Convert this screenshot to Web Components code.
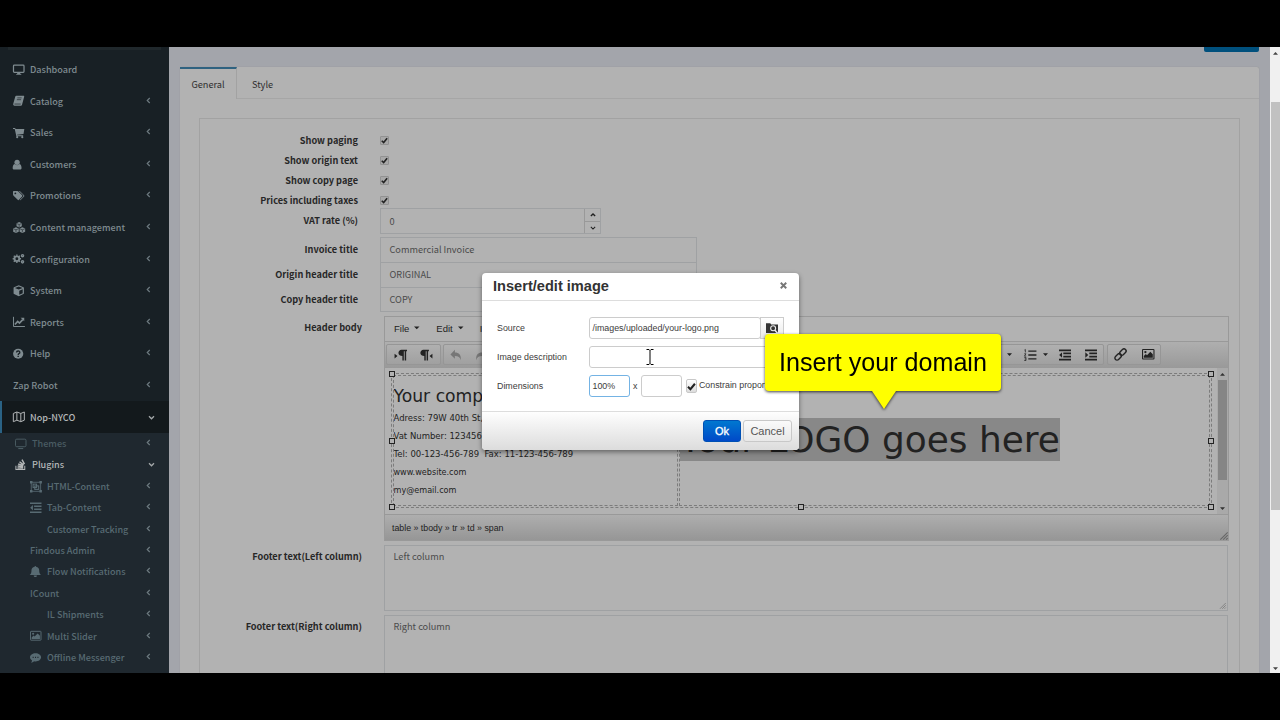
<!DOCTYPE html>
<html lang="en">
<head>
<meta charset="utf-8">
<title>Invoice settings</title>
<style>
	body {
		margin: 0;
		width: 1280px;
		height: 720px;
		overflow: hidden;
		background: #000;
		font-family: "Noto Sans CJK SC", "Open Sans", sans-serif;
	}
</style>
</head>
<body>
<admin-page></admin-page>

<script>
// 14x14 glyphs, drawn with currentColor
const F = 'fill="currentColor" stroke="none"';
const ICONS = {
	desktop: `<rect x=".6" y="1.4" width="12.8" height="8.8" rx="1" stroke-width="1.5"/><path ${F} d="M5.5 10h3l.6 2.2h1v1H3.9v-1h1z"/>`,
	book: `<path ${F} d="M4 .8h8.6c.9 0 1.200.6 1 1.400L11 12c-.2.800-.7 1.200-1.400 1.200H1.800C.6 13.200-.1 12 .3 10.800L2.700 2C2.900 1.200 3.300.8 4 .8z"/><path stroke="#182025" stroke-width=".8" d="M5.300 3.500h5.200M4.700 5.700h5.200M1.800 11h7.600"/>`,
	cart: `<path ${F} d="M0 1.200h2.600l.5 1.300h10.700l-1 6-7.900.8.2.8h7.300v1.200H4.100L2.100 2.500H0z"/><circle ${F} cx="5.100" cy="12.400" r="1.300"/><circle ${F} cx="11.300" cy="12.400" r="1.300"/>`,
	user: `<circle ${F} cx="5" cy="4" r="3.200"/><path ${F} d="M2 6.200c1.800 1.700 4.200 1.700 6 0 1.700.6 2.400 2.700 2.400 4.700 0 1.200-.8 2-2 2H1.600c-1.200 0-2-.8-2-2 0-2 .7-4.100 2.400-4.700z"/>`,
	tags: `<path ${F} fill-rule="evenodd" d="M0 2.500C0 1.800.5 1.300 1.200 1.300h4c.6 0 1.200.3 1.600.7l4.300 4.400c.5.5.5 1.100 0 1.600L7.300 12c-.5.5-1.100.5-1.600 0L1 7.300C.4 6.900 0 6.200 0 5.600zM2.800 3a1.100 1.100 0 1 0 .1 2.200A1.100 1.100 0 0 0 2.800 3z"/><path ${F} d="M7 1.300h.6c.6 0 1.200.3 1.600.7l4.300 4.400c.5.5.5 1.100 0 1.600l-3.900 4c-.5.5-.9.5-1.400.2l4-4c.6-.6.6-1.400 0-2z"/>`,
	cubes: `<path ${F} d="M7.500 0l3.200 1.400v3.800l-3.200 1.500-3.200-1.500V1.400zM3.600 6.300L7 7.800v4l-3.400 1.600L.2 11.800v-4zM11.400 6.300l3.400 1.500v4l-3.400 1.600L8 11.800v-4z"/><path stroke="#182025" stroke-width=".7" d="M4.500 1.900l3 1.200 3-1.200M.6 8.300l3 1.200 3-1.200M8.400 8.300l3 1.200 3-1.200M7.500 3.200v3M3.600 9.500v3M11.400 9.500v3"/>`,
	cogs: `<circle cx="4.700" cy="7" r="2.900" stroke-width="2.300"/><path stroke-width="1.700" d="M4.700 1.800v1.600M4.700 10.600v1.600M-.4 7h1.500M8.300 7h1.500M1 3.300l1.200 1.200M8.400 3.300L7.200 4.500M1 10.700l1.200-1.200M8.400 10.700L7.200 9.500"/><circle cx="11.600" cy="3.300" r="1.300" stroke-width="1.700"/><circle cx="11.600" cy="10.800" r="1.300" stroke-width="1.700"/>`,
	cube: `<path ${F} fill-rule="evenodd" d="M7 .3l5.700 2.500c.4.200.6.400.6.900v6.400c0 .4-.2.700-.6.900L7 13.700 1.300 11c-.4-.2-.6-.5-.6-.9V3.700c0-.5.2-.7.600-.9zM7 1.800L2.300 3.700 7 5.600l4.700-1.900zM7.600 7v5l4.200-2V5.300z"/>`,
	chart: `<path d="M.6 1v11.800H14.500" stroke-width="1.200"/><path d="M2.300 10.300l3.400-3.700 2.200 2 4-4.200" stroke-width="2"/><path ${F} d="M9.300 2h4.400v4.400z"/>`,
	help: `<circle ${F} cx="6.300" cy="7" r="6.200"/><path stroke="#182025" stroke-width="1.600" d="M4.300 5.600C4.300 3 8.300 3 8.300 5.400 8.300 6.900 6.300 6.700 6.300 8.400"/><path stroke="#182025" stroke-width="1.700" d="M6.300 9.500v1.600"/>`,
	map: `<path d="M.4 3l4.300-1.800v10L.4 13zM4.700 1.200L9.500 3v10l-4.800-1.800M9.500 3l4.300-1.800v10L9.500 13" stroke-width="1.200"/>`,
	themes: `<rect x=".6" y="1.400" width="12.800" height="9.200" rx="1.500" stroke-width="1.200"/><path d="M4 12.800h6" stroke-width="1.400"/>`,
	plugin: `<path ${F} d="M.5 8.200h1.200v4h9.600v-4h1.200v5.300H.5z"/><path stroke-width="1.800" d="M3 10.900h7M3.200 8.600l6.800.9M3.900 6l6.300 2.100M5.500 3.300l5 3.900M8.500.8l3 5.400"/>`,
	group: `<rect x="1.500" y="1.500" width="11.500" height="11" stroke-width="1"/><path ${F} d="M0 0h3v3H0zM11.500 0h3v3h-3zM0 11h3v3H0zM11.500 11h3v3h-3z"/><rect x="3.800" y="3.800" width="4.200" height="4.200"/><rect x="5.800" y="6" width="4.800" height="4.200"/>`,
	dedent: `<path stroke-width="2" d="M0 1.500h14M5 5.200h9M5 8.800h9M0 12.500h14"/><path ${F} d="M3.600 3.700v6.600L.2 7z"/>`,
	indent: `<path stroke-width="2" d="M0 1.500h14M5 5.200h9M5 8.800h9M0 12.500h14"/><path ${F} d="M.4 3.700v6.600L3.800 7z"/>`,
	bell: `<path ${F} d="M6.500 0c.6 0 .9.400.9.900 2.400.4 3.800 2 3.800 4.200 0 3 .7 4.600 2.200 6H-.4c1.500-1.400 2.200-3 2.200-6 0-2.200 1.400-3.800 3.800-4.200 0-.5.3-.9.900-.9zM4.500 11.500h4c0 2.700-4 2.700-4 0z"/>`,
	image: `<rect x=".6" y="1.600" width="12.800" height="10.800" rx=".6" stroke-width="1.200"/><circle ${F} cx="3.800" cy="4.600" r="1.300"/><path ${F} d="M2 11V9l2.300-2.300L5.600 8l3.700-3.800L12.100 7v4z"/>`,
	chat: `<path ${F} fill-rule="evenodd" d="M6.800 1.500c3.700 0 6.700 2.200 6.700 5s-3 5-6.700 5c-.6 0-1.200 0-1.700-.2-1.200 1.100-2.500 1.600-3.900 1.700.7-.8 1.200-1.700 1.300-2.700C1 9.400 0 8 0 6.500c0-2.800 3.100-5 6.800-5zM3.200 5.900v1.300h1.300V5.900zm2.900 0v1.300h1.300V5.900zm2.900 0v1.300h1.300V5.900z"/>`,
	left: `<path stroke-width="2.400" d="M9.500 2L4.500 7l5 5"/>`,
	down: `<path stroke-width="2.600" d="M2 4.500l5 5 5-5"/>`,
	up: `<path stroke-width="3.200" d="M2 9.500l5-5 5 5"/>`,
	ltr: `<path ${F} d="M-.5 5.500V11l3.400-2.800zM7.500 1H14v1.500h-1v11h-1.700v-11h-1v11H8.600V8.300C6.300 8.300 4 6.900 4 4.700S5.700 1 7.500 1z"/>`,
	rtl: `<path ${F} d="M14.500 5.500V11l-3.400-2.800zM3.900 1h6.500v1.500h-1v11H7.700v-11h-1v11H5V8.300C2.700 8.300.4 6.900.4 4.700S2.100 1 3.900 1z"/>`,
	undo: `<path ${F} d="M5.700 1v3.200c4.700 0 7.300 2.600 7 8.800-1-3.300-3-4.700-7-4.700v3.200L.5 6.300z"/>`,
	redo: `<path ${F} d="M8.300 1v3.200c-4.700 0-7.300 2.600-7 8.800 1-3.300 3-4.700 7-4.700v3.200l5.200-5.200z"/>`,
	numlist: `<path stroke-width="1.500" d="M5 2.400h9.500M5 7h9.500M5 11.600h9.500"/><path stroke-width=".9" d="M.6 1.200l1-.6V4M.3 5.600h2L.5 8.300h2M.3 9.800h2v3.600h-2M.8 11.600h1.500"/>`,
	link: `<g transform="rotate(-45 7 7)"><rect x="-.6" y="4.700" width="8" height="4.600" rx="2.300" stroke-width="1.500"/><rect x="6.600" y="4.700" width="8" height="4.600" rx="2.300" stroke-width="1.500"/></g>`,
	browse: `<path ${F} d="M0 1.500h5l1 1.300h8v10H0z"/><circle cx="8.300" cy="7.300" r="2.900" fill="#333" stroke="#eee" stroke-width="1.300"/><path stroke="#eee" stroke-width="1.700" d="M10.300 9.500l3.200 3.600"/>`,
	check: `<path stroke-width="3.200" d="M1.500 7.500l3.800 3.600 7-8.400"/>`,
	close: `<path stroke-width="3.800" d="M1.500 1.500l11 11M12.500 1.500l-11 11"/>`,
	caret: `<path ${F} d="M0 3.500h14L7 11z"/>`,
	caretup: `<path ${F} d="M0 10.500h14L7 3z"/>`,
	grip: `<path stroke-width="1.600" d="M2 13.500L13.500 2M6.500 13.500l7-7M11 13.500l2.500-2.500"/>`
};

class UiElement extends HTMLElement {
	connectedCallback() {
		if (this.shadowRoot) return;
		this.attachShadow({ mode: "open" });
		const template = document.createElement("template");
		template.innerHTML = this.template();
		this.shadowRoot.appendChild(template.content.cloneNode(true));
	}

	attr(name, fallback = "") {
		return this.getAttribute(name) ?? fallback;
	}
}

class UiIcon extends UiElement {
	template() {
		const size = this.attr("size", "11");
		return `
			<style>
				:host { display: inline-flex; flex: none; width: ${size}px; height: ${size}px; }
				svg { width: 100%; height: 100%; overflow: visible; }
			</style>
			<svg viewBox="0 0 14 14" fill="none" stroke="currentColor" stroke-width="1.3">${ICONS[this.attr("name")] || ""}</svg>
		`;
	}
}

class NavItem extends UiElement {
	template() {
		const icon = this.attr("icon");
		const arrow = this.attr("arrow", "left");
		return `
			<style>
				:host {
					display: flex;
					align-items: center;
					box-sizing: border-box;
					height: 31.6px;
					padding: 0 15px 0 13px;
					color: #7f8b90;
					font-size: 9.1px;
					font-weight: 500;
					line-height: 14px;
				}
				:host([active]) {
					background: #13191c;
					border-left: 2px solid #2a6284;
					padding-left: 11px;
					color: #b4b7b8;
				}
				:host([level="2"]), :host([level="3"]) {
					height: 21.4px;
					padding-left: 15px;
					color: #4a5c63;
				}
				:host([level="3"]) { padding-left: 30px; color: #586b73; }
				:host([open]) { color: #b4b7b8; }
				.icon { display: flex; width: 17px; }
				.label { flex: 1; white-space: nowrap; padding-bottom: 1px; }
				.arrow { display: flex; width: 9px; padding-bottom: 2px; color: #6c797f; }
				:host([active]) .arrow, :host([open]) .arrow { color: #a5a9ab; padding: 0; width: 7px; margin-right: -1px; }
			</style>
			${icon ? `<span class="icon"><ui-icon name="${icon}" size="11.5"></ui-icon></span>` : ""}
			<span class="label"><slot></slot></span>
			${arrow === "none" ? "" : `<span class="arrow"><ui-icon name="${arrow}" size="7"></ui-icon></span>`}
		`;
	}
}

class AdminSidebar extends UiElement {
	template() {
		return `
			<style>
				:host { display: flex; flex-direction: column; width: 169px; background: #182025; overflow: hidden; }
				.search { height: 3px; margin: 0 8px 3.7px; background: #20282c; flex: none; }
				.tree { background: #1f282f; flex: 1; }
			</style>
			<div class="search"></div>
			<nav-item icon="desktop" arrow="none">Dashboard</nav-item>
			<nav-item icon="book">Catalog</nav-item>
			<nav-item icon="cart">Sales</nav-item>
			<nav-item icon="user">Customers</nav-item>
			<nav-item icon="tags">Promotions</nav-item>
			<nav-item icon="cubes">Content management</nav-item>
			<nav-item icon="cogs">Configuration</nav-item>
			<nav-item icon="cube">System</nav-item>
			<nav-item icon="chart">Reports</nav-item>
			<nav-item icon="help">Help</nav-item>
			<nav-item>Zap Robot</nav-item>
			<nav-item icon="map" arrow="down" active>Nop-NYCO</nav-item>
			<div class="tree">
				<nav-item level="2" icon="themes">Themes</nav-item>
				<nav-item level="2" icon="plugin" arrow="down" open>Plugins</nav-item>
				<nav-item level="3" icon="group">HTML-Content</nav-item>
				<nav-item level="3" icon="dedent">Tab-Content</nav-item>
				<nav-item level="3" icon="blank">Customer Tracking</nav-item>
				<nav-item level="3">Findous Admin</nav-item>
				<nav-item level="3" icon="bell">Flow Notifications</nav-item>
				<nav-item level="3">ICount</nav-item>
				<nav-item level="3" icon="blank">IL Shipments</nav-item>
				<nav-item level="3" icon="image">Multi Slider</nav-item>
				<nav-item level="3" icon="chat">Offline Messenger</nav-item>
			</div>
		`;
	}
}

class FormRow extends UiElement {
	template() {
		return `
			<style>
				:host { display: flex; align-items: flex-start; height: ${this.attr("height", "20")}px; }
				label {
					flex: none;
					width: ${this.attr("label-width", "158")}px;
					padding-top: ${this.attr("drop", "2")}px;
					color: #272727;
					font-size: 9.2px;
					font-weight: 700;
					line-height: 14px;
					text-align: right;
					white-space: nowrap;
				}
				.field { margin-left: 22px; display: flex; }
			</style>
			<label>${this.attr("label")}</label>
			<div class="field"><slot></slot></div>
		`;
	}
}

class CheckBox extends UiElement {
	template() {
		return `
			<style>
				:host {
					display: flex;
					align-items: center;
					justify-content: center;
					box-sizing: border-box;
					width: 9px;
					height: 9px;
					margin-top: 4.5px;
					border: 1px solid #929292;
					border-radius: 1px;
					background: #a8a8a8;
					color: #222;
				}
				:host([large]) {
					width: 13px;
					height: 14px;
					margin: 0;
					border-color: #c8c8c8;
					border-radius: 2px;
					background: linear-gradient(#fff, #dcdcdc);
				}
			</style>
			<ui-icon name="check" size="${this.hasAttribute("large") ? 9 : 7}"></ui-icon>
		`;
	}
}

class TextField extends UiElement {
	template() {
		const area = this.hasAttribute("area");
		const spin = this.hasAttribute("spin");
		return `
			<style>
				:host {
					display: flex;
					justify-content: space-between;
					position: relative;
					box-sizing: border-box;
					width: ${this.attr("width", "317")}px;
					height: ${this.attr("height", "26")}px;
					border: 1px solid #9fa1a3;
					color: #4b4b4b;
					font-size: 9.2px;
					line-height: 14px;
				}
				.text { padding: ${area ? 3 : spin ? 5 : 4}px 8.5px; }
				.spin { display: grid; grid-template-rows: 1fr 1fr; width: 15px; border-left: 1px solid #999; color: #222; }
				.spin span { display: flex; align-items: center; justify-content: center; }
				.spin span + span { border-top: 1px solid #999; }
				.grip { position: absolute; right: 1px; bottom: 1px; display: flex; color: #777; }
			</style>
			<div class="text"><slot></slot></div>
			${spin ? `<div class="spin"><span><ui-icon name="up" size="6"></ui-icon></span><span><ui-icon name="down" size="6"></ui-icon></span></div>` : ""}
			${area ? `<span class="grip"><ui-icon name="grip" size="7"></ui-icon></span>` : ""}
		`;
	}
}

class RichEditor extends UiElement {
	template() {
		const handles = [[0, 0], [50, 0], [100, 0], [0, 50], [100, 50], [0, 100], [50, 100], [100, 100]]
			.map(([x, y]) => `<i class="handle" style="left:${x}%;top:${y}%"></i>`)
			.join("");
		return `
			<style>
				:host {
					display: flex;
					flex-direction: column;
					box-sizing: border-box;
					width: 845px;
					height: 225px;
					border: 1px solid #999;
					font-family: "Liberation Sans", Arial, sans-serif;
					font-size: 8.8px;
					color: #222;
				}
				.menu { display: flex; align-items: center; gap: 16.5px; box-sizing: border-box; height: 25px; padding: 0 0 2px 9px; border-bottom: 1px solid #999; font-size: 9.5px; }
				.menu span { display: flex; align-items: center; gap: 5px; }
				.bar { display: flex; align-items: flex-start; gap: 2px; box-sizing: border-box; height: 26px; padding: 2px 0 0 1px; background: linear-gradient(#afafaf, #999); }
				.group { display: flex; align-items: center; box-sizing: border-box; height: 21px; border: 1px solid #969696; border-radius: 2px; background: linear-gradient(#b0b0b0, #a0a0a0); }
				.para { width: 55px; padding: 0 8px; justify-content: space-between; }
				.history { width: 158px; padding: 0 6px; gap: 13px; color: #777; }
				.lists { width: 501px; padding: 0 6px 0 5px; justify-content: flex-end; }
				.media { width: 54px; padding: 0 6px; justify-content: space-between; margin-left: 1px; }
				.content { display: flex; flex: 1; border-bottom: 1px solid #999; }
				.body { width: 827px; padding: 5px 0 0 5.5px; }
				.table {
					position: relative;
					box-sizing: border-box;
					display: grid;
					grid-template-columns: 285px 1fr;
					gap: 1px;
					width: 821px;
					height: 135px;
					padding: 1px;
					border: 1px dashed #7c7c7c;
					font-family: "DejaVu Sans", Verdana, sans-serif;
				}
				.cell { border: 1px dashed #7c7c7c; white-space: nowrap; overflow: hidden; }
				h3 { margin: 9px 0 2px; font-size: 17.2px; line-height: 22px; font-weight: 400; }
				p { margin: 0; font-size: 8.5px; line-height: 18px; }
				.web { font-size: 8.1px; }
				.logo { display: flex; align-items: center; }
				.logo span { display: block; height: 43px; margin-top: -2px; line-height: 44px; background: #888; font-size: 35.9px; }
				.handle { position: absolute; width: 4px; height: 4px; margin: -3px; border: 1px solid #222; background: #b2b2b2; }
				.scroll { display: flex; flex-direction: column; align-items: center; justify-content: space-between; width: 11px; margin-left: auto; background: #a9a9a9; color: #333; padding: 4px 0 3px; box-sizing: border-box; }
				.thumb { width: 9px; height: 100px; margin-bottom: 24px; background: #858585; }
				.status { display: flex; align-items: center; justify-content: space-between; height: 25px; padding: 0 0 0 7px; background: linear-gradient(#aeaeae, #969696); }
				.status ui-icon { align-self: flex-end; color: #666; }
			</style>
			<div class="menu">
				<span>File <ui-icon name="caret" size="5.5"></ui-icon></span>
				<span>Edit <ui-icon name="caret" size="5.5"></ui-icon></span>
				<span>Insert <ui-icon name="caret" size="5.5"></ui-icon></span>
			</div>
			<div class="bar">
				<div class="group para"><ui-icon name="ltr" size="12"></ui-icon><ui-icon name="rtl" size="12"></ui-icon></div>
				<div class="group history"><ui-icon name="undo" size="12"></ui-icon><ui-icon name="redo" size="12"></ui-icon></div>
				<div class="group lists">
					<ui-icon name="caret" size="5" style="margin-right:12px"></ui-icon>
					<ui-icon name="numlist" size="12" style="margin-right:7px"></ui-icon>
					<ui-icon name="caret" size="5" style="margin-right:11px"></ui-icon>
					<ui-icon name="dedent" size="12" style="margin-right:14px"></ui-icon>
					<ui-icon name="indent" size="12"></ui-icon>
				</div>
				<div class="group media"><ui-icon name="link" size="13"></ui-icon><ui-icon name="image" size="12.5"></ui-icon></div>
			</div>
			<div class="content">
				<div class="body">
					<div class="table">
						<div class="cell">
							<h3>Your company</h3>
							<p>Adress: 79W 40th St, New York</p>
							<p>Vat Number: 123456789</p>
							<p>Tel: 00-123-456-789 &nbsp;Fax: 11-123-456-789</p>
							<p class="web">www.website.com</p>
							<p class="web">my@email.com</p>
						</div>
						<div class="cell logo"><span>Your LOGO goes here</span></div>
						${handles}
					</div>
				</div>
				<div class="scroll">
					<ui-icon name="caretup" size="5"></ui-icon>
					<div class="thumb"></div>
					<ui-icon name="caret" size="5"></ui-icon>
				</div>
			</div>
			<div class="status">table » tbody » tr » td » span <ui-icon name="grip" size="9"></ui-icon></div>
		`;
	}
}

class ImageDialog extends UiElement {
	template() {
		return `
			<style>
				:host {
					position: absolute;
					left: 481.5px;
					top: 226px;
					display: flex;
					flex-direction: column;
					width: 317.5px;
					height: 177px;
					border-radius: 4px;
					background: #fff;
					box-shadow: 0 2px 5px rgba(0, 0, 0, .45);
					overflow: hidden;
					font-family: "Liberation Sans", Arial, sans-serif;
					font-size: 8.85px;
					color: #3c3c3c;
				}
				header { display: flex; align-items: center; justify-content: space-between; box-sizing: border-box; height: 28px; padding: 0 12px 2px 11.5px; border-bottom: 1px solid #ddd; color: #777; }
				h2 { margin: 0; font-size: 14.6px; font-weight: 700; color: #333; }
				main { flex: 1; display: grid; grid-template-columns: 91.5px 195px; grid-auto-rows: 22px; row-gap: 7px; padding: 16px 0 0 15.5px; align-items: center; }
				main > span { padding-bottom: 1px; }
				.line { display: flex; height: 22px; align-items: center; white-space: nowrap; }
				.input { flex: 1; display: flex; align-items: center; box-sizing: border-box; height: 22px; padding: 0 3px 1px; border: 1px solid #ccc; border-radius: 3px; }
				.small { flex: none; width: 41px; }
				.focus { border-color: #74b3e4; }
				.browse { display: flex; align-items: center; justify-content: center; box-sizing: border-box; width: 24px; height: 22px; margin-left: -1px; border: 1px solid #ccc; background: linear-gradient(#fff, #e8e8e8); color: #333; }
				.by { padding: 0 4px 0 3.5px; }
				.constrain { padding: 0 0 3px 2px; }
				footer { display: flex; align-items: center; justify-content: flex-end; gap: 2px; box-sizing: border-box; height: 39px; padding-right: 7px; border-top: 1px solid #ddd; background: linear-gradient(#fefefe, #dcdcdc); }
				button { box-sizing: border-box; height: 22px; width: 49px; padding: 0 0 1px; border: 1px solid #c8c8c8; border-radius: 3px; background: linear-gradient(#fafafa, #e8e8e8); color: #555; font: 11px "Liberation Sans", Arial, sans-serif; }
				.ok { width: 38px; border-color: #0050b4; background: linear-gradient(#0078d0, #0049c8); color: #fff; -webkit-text-stroke: .3px; }
			</style>
			<header><h2>Insert/edit image</h2><ui-icon name="close" size="7"></ui-icon></header>
			<main>
				<span>Source</span>
				<div class="line"><div class="input">/images/uploaded/your-logo.png</div><span class="browse"><ui-icon name="browse" size="12"></ui-icon></span></div>
				<span>Image description</span>
				<div class="line"><div class="input"></div></div>
				<span>Dimensions</span>
				<div class="line"><div class="input small focus">100%</div><span class="by">x</span><div class="input small" style="margin-right:3.5px"></div><check-box large></check-box><span class="constrain">Constrain proportions</span></div>
			</main>
			<footer><button class="ok">Ok</button><button>Cancel</button></footer>
		`;
	}
}

class CallOut extends UiElement {
	template() {
		return `
			<style>
				:host {
					position: absolute;
					left: 765px;
					top: 287px;
					display: flex;
					align-items: center;
					justify-content: center;
					box-sizing: border-box;
					width: 236px;
					height: 57px;
					border-radius: 4px;
					background: #ff0;
					color: #000;
					filter: drop-shadow(0 1px 1.5px rgba(0, 0, 0, .75));
					font: 25.1px "Liberation Sans", Arial, sans-serif;
				}
				:host::after {
					content: "";
					position: absolute;
					left: 107px;
					top: 57px;
					border: solid transparent;
					border-width: 18px 12px 0;
					border-top-color: #ff0;
				}
			</style>
			<slot></slot>
		`;
	}
}

class PageScrollbar extends UiElement {
	template() {
		return `
			<style>
				:host { display: flex; flex-direction: column; align-items: center; width: 10px; background: #f0f0f0; color: #444; }
				.thumb { width: 9px; height: 408px; margin: 46px 0 auto 1px; background: #c1c1c1; }
				ui-icon:first-of-type { margin-top: 4px; }
				ui-icon:last-of-type { margin-bottom: 2px; }
			</style>
			<ui-icon name="caretup" size="5"></ui-icon>
			<div class="thumb"></div>
			<ui-icon name="caret" size="5"></ui-icon>
		`;
	}
}

class AdminPage extends UiElement {
	template() {
		return `
			<style>
				:host { position: relative; display: flex; box-sizing: border-box; height: 626px; margin-top: 47px; overflow: hidden; background: #a3a5ab; }
				.content { flex: 1; display: flex; flex-direction: column; padding: 0 11px; }
				.save { flex: none; align-self: flex-end; width: 55px; height: 5px; margin-bottom: 15px; background: #00507d; border-radius: 0 0 2px 2px; }
				.card { flex: 1; background: #b2b2b2; border-radius: 2px 2px 0 0; box-shadow: 0 0 1px #888; }
				.tabs { display: flex; height: 32px; box-sizing: border-box; border-bottom: 1px solid #a6a6a6; font-size: 9.2px; font-weight: 400; line-height: 14px; color: #2e2e2e; }
				.tab { box-sizing: border-box; width: 57px; height: 32px; padding-top: 9.5px; text-align: center; }
				.tab.on { padding-top: 7.5px; border-top: 2px solid #2f6280; border-right: 1px solid #a2a2a2; background: #b2b2b2; }
				.tab + .tab { width: 51px; }
				.panel { box-sizing: border-box; width: 1041px; height: 600px; margin: 19px 0 0 19px; padding-top: 12px; border: 1px solid #a2a2a2; }
				.cursor { position: absolute; left: 646px; top: 302px; width: 8px; height: 16px; }
			</style>
			<admin-sidebar></admin-sidebar>
			<div class="content">
				<div class="save"></div>
				<div class="card">
					<div class="tabs"><div class="tab on">General</div><div class="tab">Style</div></div>
					<div class="panel">
						<form-row label="Show paging"><check-box></check-box></form-row>
						<form-row label="Show origin text"><check-box></check-box></form-row>
						<form-row label="Show copy page"><check-box></check-box></form-row>
						<form-row label="Prices including taxes" height="17"><check-box></check-box></form-row>
						<form-row label="VAT rate (%)" height="29" drop="5"><text-field width="221" height="26" spin>0</text-field></form-row>
						<form-row label="Invoice title" height="25" drop="5"><text-field>Commercial Invoice</text-field></form-row>
						<form-row label="Origin header title" height="25" drop="5"><text-field>ORIGINAL</text-field></form-row>
						<form-row label="Copy header title" height="29" drop="5"><text-field height="25">COPY</text-field></form-row>
						<form-row label="Header body" height="229" drop="4" label-width="162"><rich-editor></rich-editor></form-row>
						<form-row label="Footer text(Left column)" height="70" drop="4" label-width="162"><text-field area width="844" height="66">Left column</text-field></form-row>
						<form-row label="Footer text(Right column)" height="70" drop="4" label-width="162"><text-field area width="844" height="66">Right column</text-field></form-row>
					</div>
				</div>
			</div>
			<page-scrollbar></page-scrollbar>
			<image-dialog></image-dialog>
			<svg class="cursor" viewBox="0 0 8 16" fill="none" stroke="#000" stroke-width="1"><path d="M.5.5H3l1 1 1-1h2.5M4 1.5v13M.5 15.5H3l1-1 1 1h2.5"/></svg>
			<call-out>Insert your domain</call-out>
		`;
	}
}

customElements.define("ui-icon", UiIcon);
customElements.define("nav-item", NavItem);
customElements.define("admin-sidebar", AdminSidebar);
customElements.define("form-row", FormRow);
customElements.define("check-box", CheckBox);
customElements.define("text-field", TextField);
customElements.define("rich-editor", RichEditor);
customElements.define("image-dialog", ImageDialog);
customElements.define("call-out", CallOut);
customElements.define("page-scrollbar", PageScrollbar);
customElements.define("admin-page", AdminPage);
</script>
</body>
</html>
